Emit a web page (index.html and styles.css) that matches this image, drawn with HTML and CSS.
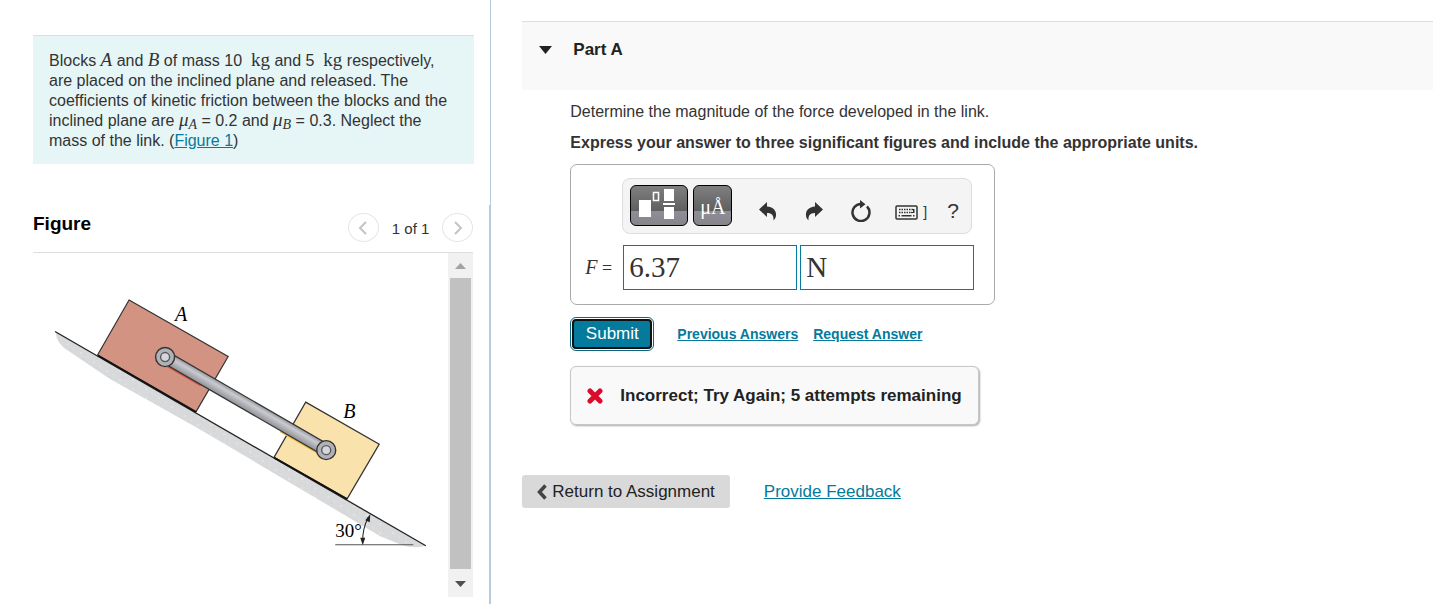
FILE: index.html
```html
<!DOCTYPE html>
<html lang="en">
<head>
  <meta charset="UTF-8">
  <meta name="viewport" content="width=device-width, initial-scale=1">
  <title>Part A</title>
  <link rel="stylesheet" href="styles.css">
</head>
<body>
  <div class="page">

    <aside class="sidebar">
      <section class="intro">
        <p class="problem">Blocks <i class="math">A</i> and <i class="math">B</i> of mass 10 &nbsp;<span class="math">kg</span> and 5 &nbsp;<span class="math">kg</span> respectively, are placed on the inclined plane and released. The coefficients of kinetic friction between the blocks and the inclined plane are <i class="math">μ<sub>A</sub></i> = 0.2 and <i class="math">μ<sub>B</sub></i> = 0.3. Neglect the mass of the link. (<a href="#figure">Figure 1</a>)</p>
      </section>

      <section class="figure" id="figure">
        <header class="figure-header">
          <h2>Figure</h2>
          <nav class="pager">
            <button type="button" class="round" aria-label="Previous figure">
              <svg width="10" height="14" viewBox="0 0 10 14"><path d="M8 1 2 7l6 6" /></svg>
            </button>
            <span>1 of 1</span>
            <button type="button" class="round" aria-label="Next figure">
              <svg width="10" height="14" viewBox="0 0 10 14"><path d="M2 1l6 6-6 6" /></svg>
            </button>
          </nav>
        </header>

        <div class="figure-view">
          <svg class="drawing" viewBox="33 253 415 344" role="img" aria-label="Two linked blocks on a 30 degree incline">
            <defs>
              <linearGradient id="rod" x1="0" y1="0" x2="0" y2="1">
                <stop offset="0" stop-color="#96989d" />
                <stop offset="0.35" stop-color="#cacbd0" />
                <stop offset="0.6" stop-color="#b3b5ba" />
                <stop offset="1" stop-color="#8f9196" />
              </linearGradient>
              <pattern id="grit" width="13" height="9" patternUnits="userSpaceOnUse">
                <rect width="13" height="9" fill="#d8d9db" />
                <circle cx="3" cy="2" r="0.8" fill="#ebebec" />
                <circle cx="9" cy="6" r="0.7" fill="#e8e8e9" />
                <circle cx="6" cy="8" r="0.6" fill="#cccdcf" />
              </pattern>
            </defs>

            <!-- incline -->
            <path d="M56 332 425 545.500Q415 549 402 545L380 536 196 427 110 379 70 352Q55 343 56 332z" fill="url(#grit)" />
            <path d="M55 331.500 425.500 545.500" stroke="#222" stroke-width="1.300" />

            <!-- blocks -->
            <path d="M129 300 228 356.500 196 411.500 97.500 355z" fill="#d39383" stroke="#333" stroke-width="1.200" />
            <path d="M305.500 402 379 444 347 498.500 274 457z" fill="#f9e2ac" stroke="#333" stroke-width="1.200" />
            <path d="M98 355.500 196 412M274 457.500 347 499" stroke="#111" stroke-width="1.700" />

            <!-- link -->
            <g transform="translate(165 357) rotate(30)">
              <path d="M6 7H45" stroke="#e0503c" stroke-width="1.500" />
              <path d="M137 7H182" stroke="#f3bb3c" stroke-width="1.500" />
              <rect x="4" y="-6" width="178" height="12" fill="url(#rod)" stroke="#333" stroke-width="1.200" />
            </g>
            <g stroke="#333" stroke-width="1.400">
              <circle cx="165" cy="357" r="9.500" fill="#b0b2b7" />
              <circle cx="165" cy="357" r="4.500" fill="#d5d6d9" stroke="#5a5a5e" />
              <circle cx="326" cy="450" r="9.500" fill="#b0b2b7" />
              <circle cx="326" cy="450" r="4.500" fill="#d5d6d9" stroke="#5a5a5e" />
            </g>

            <!-- angle -->
            <path d="M335 544.500H413" stroke="#555" />
            <path d="M368 517Q362 529 362.500 541" fill="none" stroke="#222" />
            <path d="M370 514 369.500 522 365 520zM362.500 545 360 537.500H365z" fill="#222" />

            <text x="175" y="321" class="label">A</text>
            <text x="343" y="418" class="label">B</text>
            <text x="335" y="537" class="angle">30°</text>
          </svg>

          <div class="scrollbar">
            <svg width="11" height="6" viewBox="0 0 11 6"><path d="M0 6 5.500 0 11 6z" fill="#a3a3a3" /></svg>
            <div class="thumb"></div>
            <svg width="11" height="6" viewBox="0 0 11 6"><path d="M0 0 5.500 6 11 0z" fill="#505050" /></svg>
          </div>
        </div>
      </section>
    </aside>

    <main class="content">
      <header class="part-header">
        <svg width="13" height="8" viewBox="0 0 13 8"><path d="M0 0H13L6.500 8z" fill="#222" /></svg>
        <h2>Part A</h2>
      </header>

      <form class="part-body">
        <p>Determine the magnitude of the force developed in the link.</p>
        <p class="instructions">Express your answer to three significant figures and include the appropriate units.</p>

        <div class="answer-box">
          <div class="toolbar">
            <button type="button" class="dark templates" aria-label="Templates">
              <svg width="41" height="34" viewBox="0 0 41 34">
                <path d="M0 12h12v17H0zM25 1h10v12H25zM24 15h12v2H24zM25 19h10v12H25z" fill="#fff" />
                <path d="M14.500 4.500h5v8h-5z" fill="none" stroke="#fff" stroke-width="1.500" />
              </svg>
            </button>
            <button type="button" class="dark units">μÅ</button>
            <button type="button" class="tool" aria-label="Undo">
              <svg width="18" height="19" viewBox="0 0 18 19"><path d="M8 0v4.500C14 5 17.500 8.500 17 13.500c-.2 2-1 3.500-2.500 5 .3-4.500-1-7.500-6.500-7.500V15L0 7.500z" /></svg>
            </button>
            <button type="button" class="tool" aria-label="Redo">
              <svg width="18" height="19" viewBox="0 0 18 19"><path d="M10 0v4.500C4 5 .5 8.500 1 13.500c.2 2 1 3.500 2.500 5-.3-4.500 1-7.500 6.500-7.500V15l8-7.500z" /></svg>
            </button>
            <button type="button" class="tool" aria-label="Reset">
              <svg width="20" height="22" viewBox="0 0 20 22">
                <path d="M16 6.500A8.500 8.500 0 1 1 10 4" fill="none" stroke="#333" stroke-width="2.500" />
                <path d="M9 0 14.500 4.200 9 8.500z" />
              </svg>
            </button>
            <button type="button" class="tool keyboard" aria-label="Keyboard shortcuts">
              <svg width="23" height="15" viewBox="0 0 23 15">
                <rect x="1" y="1" width="21" height="13" rx="1" fill="none" stroke="#333" stroke-width="1.500" />
                <path d="M4 4.500H19M4 7.500H17" fill="none" stroke="#333" stroke-width="1.500" stroke-dasharray="1.500 1" />
                <path d="M18 4h1.500v4H16V7h2zM3.500 10H5v1.500H3.500zM6.500 10h10v1.500h-10zM18 10h1.500v1.500H18z" />
              </svg>
              <span>]</span>
            </button>
            <button type="button" class="tool help">?</button>
          </div>

          <div class="answer-row">
            <label for="value"><i>F</i> =</label>
            <input type="text" id="value" value="6.37">
            <input type="text" id="unit" value="N" aria-label="Units">
          </div>
        </div>

        <div class="actions">
          <button type="submit" class="submit">Submit</button>
          <a href="#">Previous Answers</a>
          <a href="#">Request Answer</a>
        </div>

        <div class="feedback">
          <svg width="16" height="16" viewBox="0 0 16 16"><path d="M3 3 13 13M13 3 3 13" stroke="#dc0a2d" stroke-width="5" stroke-linecap="round" /></svg>
          <strong>Incorrect; Try Again; 5 attempts remaining</strong>
        </div>
      </form>

      <footer class="page-footer">
        <button type="button" class="return">
          <svg width="10" height="16" viewBox="0 0 10 16"><path d="M8.500 1.500 2.500 8l6 6.500" fill="none" stroke="#444" stroke-width="3.500" /></svg>
          Return to Assignment
        </button>
        <a href="#">Provide Feedback</a>
      </footer>
    </main>

  </div>
</body>
</html>
```

FILE: styles.css
```css
* {
  box-sizing: border-box;
}

:root {
  --text: #333;
  --link: #047a9c;
  --line: #ddd;
  --divider: #b8cbdc;
}

body {
  margin: 0;
  background: #fff;
  color: var(--text);
  font: 16px/20px "Liberation Sans", Arial, sans-serif;
}

h2,
p {
  margin: 0;
}

a {
  color: var(--link);
}

button {
  padding: 0;
  font: inherit;
  cursor: pointer;
}

.page {
  display: grid;
  grid-template-columns: 12fr 23fr;
  min-height: 100vh;
}

/* left column */
.sidebar {
  display: flex;
  flex-direction: column;
}

.intro {
  padding: 35px 16px 41px 33px;
  border-right: 1px solid var(--divider);
}

.problem {
  padding: 15px 24px 13px 16px;
  border-top: 1px solid var(--line);
  background: #e6f6f7;
}

.math {
  font-family: "Liberation Serif", "Times New Roman", serif;
  font-size: 19px;
  line-height: 16px;
}

.math sub {
  font-size: 14px;
  line-height: 0;
  vertical-align: -3px;
}

.figure {
  flex: 1;
  padding: 0 16px 7px 33px;
  border-right: 2px solid var(--divider);
}

.figure-header {
  display: flex;
  justify-content: space-between;
  align-items: center;
  height: 48px;
  padding-bottom: 2px;
  border-bottom: 1px solid var(--line);
}

.figure-header h2 {
  padding-bottom: 7px;
  color: #000;
  font-size: 19px;
}

.pager {
  display: flex;
  align-items: center;
  gap: 13px;
  font-size: 15px;
}

.pager span {
  padding-top: 3px;
}

.round {
  display: flex;
  justify-content: center;
  align-items: center;
  width: 31px;
  height: 29px;
  border: 1px solid #e6e6e6;
  border-radius: 50%;
  background: #fff;
}

.round path {
  fill: none;
  stroke: #c4c4c4;
  stroke-width: 2;
}

.figure-view {
  display: flex;
}

.drawing {
  flex: 1;
  min-width: 0;
}

.label {
  font: italic 20px "Liberation Serif", serif;
}

.angle {
  font: 19px "Liberation Serif", serif;
}

.scrollbar {
  display: flex;
  flex-direction: column;
  align-items: center;
  gap: 9px;
  width: 25px;
  padding: 10px 2px;
  background: #f1f1f1;
}

.thumb {
  flex: 1;
  width: 100%;
  margin-bottom: 3px;
  background: #c1c1c1;
}

/* right column */
.content {
  padding: 21px 0 0 31px;
}

.part-header {
  display: flex;
  gap: 21px;
  height: 69px;
  padding: 18px 17px;
  border-top: 1px solid var(--line);
  background: #f9f9f9;
  color: #222;
}

.part-header svg {
  margin-top: 6px;
}

.part-header h2 {
  font-size: 17px;
}

.part-body {
  display: flex;
  flex-direction: column;
  align-items: flex-start;
  padding: 12px 16px 0 48px;
}

.instructions {
  margin: 11px 0;
  font-weight: bold;
}

.answer-box {
  padding: 13px 20px 14px 14px;
  border: 1px solid #aaa;
  border-radius: 7px;
}

.toolbar {
  display: flex;
  align-items: center;
  height: 56px;
  margin: 0 2px 11px 37px;
  padding: 0 7px 2px;
  border: 1px solid var(--line);
  border-radius: 8px;
  background: #f4f4f4;
}

.dark {
  display: flex;
  justify-content: center;
  align-items: center;
  height: 41px;
  margin-right: 5px;
  border: 1px solid #000;
  border-radius: 6px;
  background: linear-gradient(#7f7f82, #606060 63%, #8f8d97 64%, #85858a);
  color: #fff;
}

.templates {
  width: 58px;
}

.units {
  width: 39px;
  margin-right: 27px;
  padding-top: 4px;
  font: 20px "Liberation Serif", serif;
}

.tool {
  display: flex;
  align-items: center;
  height: 24px;
  margin: 12px 28px 0 0;
  border: 0;
  background: none;
  color: var(--text);
}

.tool svg {
  fill: #333;
}

.keyboard {
  gap: 5px;
  margin: 14px 20px 0 -4px;
  font-size: 14px;
}

.keyboard svg {
  flex: none;
}

.help {
  margin: 12px 4px 0 0;
  font-size: 21px;
}

.answer-row {
  display: flex;
  align-items: center;
  gap: 3px;
}

.answer-row label {
  width: 35px;
  font: 18px "Liberation Serif", serif;
}

.answer-row label i {
  font-size: 20px;
}

.answer-row input {
  width: 174px;
  height: 45px;
  padding: 0 5px;
  border: 1px solid var(--link);
  color: var(--text);
  font: 29px "Liberation Serif", "Times New Roman", serif;
}

.actions {
  display: flex;
  align-items: center;
  gap: 15px;
  margin: 12px 0 15px;
  font-size: 14px;
  font-weight: bold;
}

.submit {
  width: 80px;
  height: 30px;
  margin: 2px 10px 2px 2px;
  border: 2px solid #111;
  border-radius: 4px;
  outline: 1px solid #0a6580;
  outline-offset: 1px;
  background: var(--link);
  color: #fff;
  font-size: 17px;
  font-weight: normal;
}

.feedback {
  display: flex;
  align-items: center;
  gap: 17px;
  padding: 18px 16px;
  border: 1px solid #c7c7c7;
  border-radius: 6px;
  background: #f9f9f9;
  box-shadow: 1px 1px 2px #aaa;
  color: #222;
  font-size: 17px;
  line-height: 21px;
}

.page-footer {
  display: flex;
  align-items: center;
  gap: 34px;
  padding: 50px 0 16px;
  font-size: 17px;
}

.return {
  display: flex;
  align-items: center;
  gap: 5px;
  padding: 7px 15px 6px;
  border: 0;
  border-radius: 3px;
  background: #d9d9d9;
  color: #222;
}
```
